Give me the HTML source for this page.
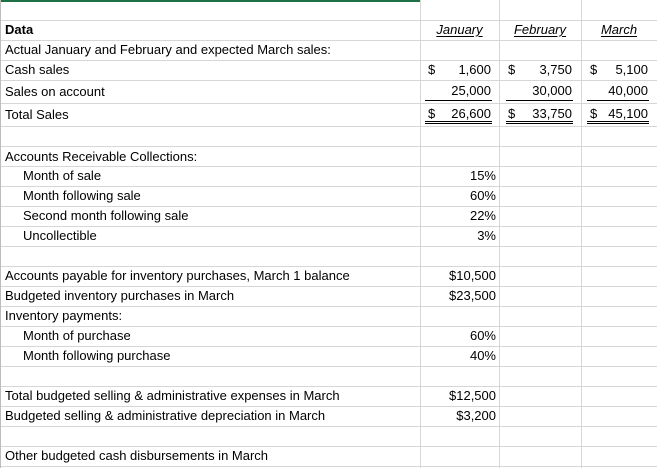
<!DOCTYPE html>
<html><head><meta charset="utf-8">
<style>
*{margin:0;padding:0;box-sizing:border-box}
html,body{width:657px;height:468px;background:#fff;overflow:hidden}
body{position:relative;font-family:"Liberation Sans",sans-serif;font-size:13px;color:#000}
.h{position:absolute;left:0;width:657px;height:1px;background:#d6d6d6}
.v{position:absolute;top:0;width:1px;height:468px;background:#d6d6d6}
.t{position:absolute;white-space:nowrap;line-height:19px;height:20px}
.r{text-align:right}
.u{position:absolute;height:1px;background:#000}
.hd{position:absolute;font-style:italic;text-decoration:underline;text-underline-offset:2px;line-height:19px;text-align:center}
</style></head><body>
<div style="position:absolute;left:0;top:0;width:420px;height:2px;background:#1e7145"></div>
<div class="h" style="top:20px"></div><div class="h" style="top:40px"></div>
<div class="h" style="top:60px"></div><div class="h" style="top:80px"></div>
<div class="h" style="top:103px"></div><div class="h" style="top:126px"></div>
<div class="h" style="top:146px"></div><div class="h" style="top:166px"></div>
<div class="h" style="top:186px"></div><div class="h" style="top:206px"></div>
<div class="h" style="top:226px"></div><div class="h" style="top:246px"></div>
<div class="h" style="top:266px"></div><div class="h" style="top:286px"></div>
<div class="h" style="top:306px"></div><div class="h" style="top:326px"></div>
<div class="h" style="top:346px"></div><div class="h" style="top:366px"></div>
<div class="h" style="top:386px"></div><div class="h" style="top:406px"></div>
<div class="h" style="top:426px"></div><div class="h" style="top:446px"></div>
<div class="h" style="top:466px"></div>
<div class="v" style="left:0;background:#bdbdbd"></div>
<div class="v" style="left:420px"></div><div class="v" style="left:499px"></div><div class="v" style="left:581px"></div>

<div class="t" style="left:5px;top:20px;font-weight:bold">Data</div>
<div class="t" style="left:5px;top:40px">Actual January and February and expected March sales:</div>
<div class="t" style="left:5px;top:60px">Cash sales</div>
<div class="t" style="left:5px;top:82px">Sales on account</div>
<div class="t" style="left:5px;top:105px">Total Sales</div>
<div class="t" style="left:5px;top:147px">Accounts Receivable Collections:</div>
<div class="t" style="left:23px;top:166px">Month of sale</div>
<div class="t" style="left:23px;top:186px">Month following sale</div>
<div class="t" style="left:23px;top:206px">Second month following sale</div>
<div class="t" style="left:23px;top:226px">Uncollectible</div>
<div class="t" style="left:5px;top:266px">Accounts payable for inventory purchases, March 1 balance</div>
<div class="t" style="left:5px;top:286px">Budgeted inventory purchases in March</div>
<div class="t" style="left:5px;top:306px">Inventory payments:</div>
<div class="t" style="left:23px;top:326px">Month of purchase</div>
<div class="t" style="left:23px;top:346px">Month following purchase</div>
<div class="t" style="left:5px;top:386px">Total budgeted selling &amp; administrative expenses in March</div>
<div class="t" style="left:5px;top:406px">Budgeted selling &amp; administrative depreciation in March</div>
<div class="t" style="left:5px;top:446px">Other budgeted cash disbursements in March</div>

<div class="hd" style="left:420px;width:79px;top:20px">January</div>
<div class="hd" style="left:499px;width:82px;top:20px">February</div>
<div class="hd" style="left:581px;width:76px;top:20px">March</div>

<div class="t" style="left:428px;top:60px">$</div><div class="t r" style="right:166px;top:60px">1,600</div>
<div class="t" style="left:508px;top:60px">$</div><div class="t r" style="right:85px;top:60px">3,750</div>
<div class="t" style="left:590px;top:60px">$</div><div class="t r" style="right:9px;top:60px">5,100</div>

<div class="t r" style="right:166px;top:81px">25,000</div>
<div class="t r" style="right:85px;top:81px">30,000</div>
<div class="t r" style="right:9px;top:81px">40,000</div>
<div class="u" style="left:425px;width:67px;top:100px"></div>
<div class="u" style="left:506px;width:67px;top:100px"></div>
<div class="u" style="left:587px;width:62px;top:100px"></div>

<div class="t" style="left:428px;top:104px">$</div><div class="t r" style="right:166px;top:104px">26,600</div>
<div class="t" style="left:508px;top:104px">$</div><div class="t r" style="right:85px;top:104px">33,750</div>
<div class="t" style="left:590px;top:104px">$</div><div class="t r" style="right:9px;top:104px">45,100</div>
<div class="u" style="left:425px;width:67px;top:121px"></div><div class="u" style="left:425px;width:67px;top:123px"></div>
<div class="u" style="left:506px;width:67px;top:121px"></div><div class="u" style="left:506px;width:67px;top:123px"></div>
<div class="u" style="left:587px;width:62px;top:121px"></div><div class="u" style="left:587px;width:62px;top:123px"></div>

<div class="t r" style="right:161px;top:166px">15%</div>
<div class="t r" style="right:161px;top:186px">60%</div>
<div class="t r" style="right:161px;top:206px">22%</div>
<div class="t r" style="right:161px;top:226px">3%</div>
<div class="t r" style="right:161px;top:266px">$10,500</div>
<div class="t r" style="right:161px;top:286px">$23,500</div>
<div class="t r" style="right:161px;top:326px">60%</div>
<div class="t r" style="right:161px;top:346px">40%</div>
<div class="t r" style="right:161px;top:386px">$12,500</div>
<div class="t r" style="right:161px;top:406px">$3,200</div>
</body></html>
